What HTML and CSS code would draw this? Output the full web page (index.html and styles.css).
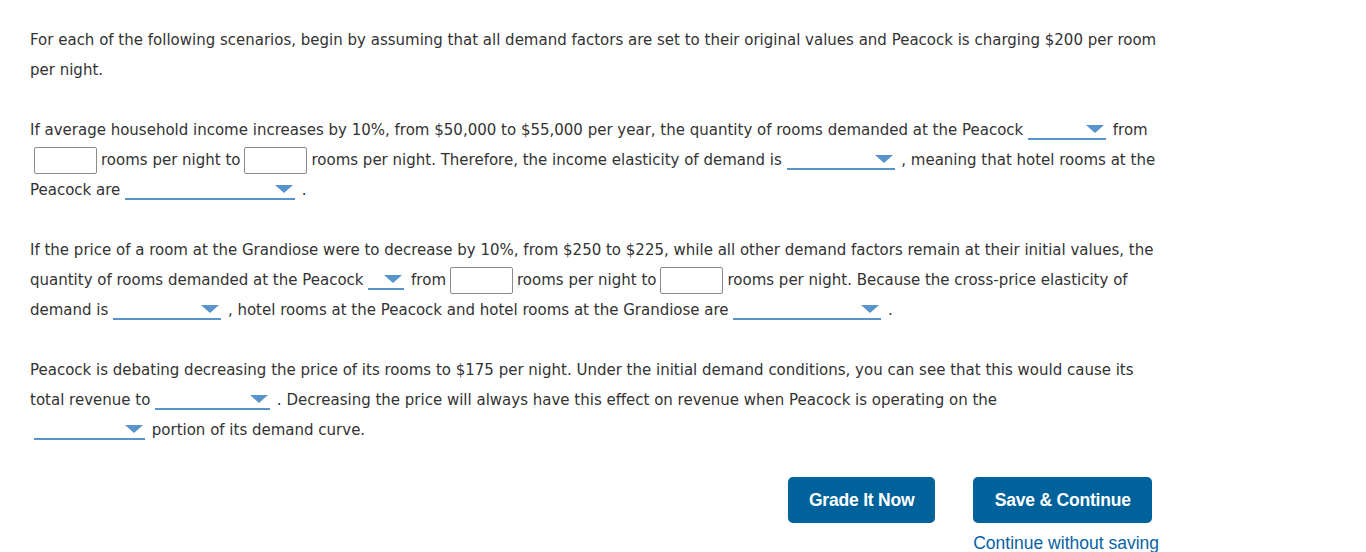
FILE: index.html
```html
<!DOCTYPE html>
<html>
<head>
<meta charset="utf-8">
<link rel="stylesheet" href="styles.css">
</head>
<body>
<div class="page">
  <p>For each of the following scenarios, begin by assuming that all demand factors are set to their original values and Peacock is charging $200 per room<br>per night.</p>

  <p>If average household income increases by 10%, from $50,000 to $55,000 per year, the quantity of rooms demanded at the Peacock <span class="dd w78"><i class="tri"></i></span> from<br><span class="box"></span>rooms per night to<span class="box"></span>rooms per night. Therefore, the income elasticity of demand is <span class="dd w108"><i class="tri"></i></span> , meaning that hotel rooms at the<br>Peacock are <span class="dd w170"><i class="tri"></i></span> .</p>

  <p>If the price of a room at the Grandiose were to decrease by 10%, from $250 to $225, while all other demand factors remain at their initial values, the<br>quantity of rooms demanded at the Peacock <span class="dd w36"><i class="tri"></i></span> from<span class="box"></span>rooms per night to<span class="box"></span>rooms per night. Because the cross-price elasticity of<br>demand is <span class="dd w108"><i class="tri"></i></span> , hotel rooms at the Peacock and hotel rooms at the Grandiose are <span class="dd w148"><i class="tri"></i></span> .</p>

  <p>Peacock is debating decreasing the price of its rooms to $175 per night. Under the initial demand conditions, you can see that this would cause its<br>total revenue to <span class="dd w115"><i class="tri"></i></span> . Decreasing the price will always have this effect on revenue when Peacock is operating on the<br><span class="dd w111 lead"><i class="tri"></i></span> portion of its demand curve.</p>

  <div class="actions">
    <button class="btn grade">Grade It Now</button>
    <div class="save-col">
      <button class="btn save">Save &amp; Continue</button>
      <a class="skip" href="#">Continue without saving</a>
    </div>
  </div>
</div>
</body>
</html>
```

FILE: styles.css
```css
html, body {
  margin: 0;
  padding: 0;
  background: #ffffff;
}

.page {
  padding: 25px 30px 0 30px;
  font-family: "DejaVu Sans", Verdana, sans-serif;
  font-size: 15px;
  line-height: 30px;
  color: #333333;
}

.page p {
  margin: 0 0 30px 0;
  white-space: nowrap;
}

.dd {
  display: inline-block;
  box-sizing: border-box;
  height: 20px;
  border-bottom: 2px solid #5694cb;
  vertical-align: -5px;
  margin-right: 2px;
}

.dd.lead {
  margin-left: 4px;
}

.tri {
  float: right;
  width: 0;
  height: 0;
  margin: 5px 2px 0 0;
  border-left: 9px solid transparent;
  border-right: 9px solid transparent;
  border-top: 8px solid #5694cb;
}

.w36 { width: 36px; }
.w78 { width: 78px; }
.w108 { width: 108px; }
.w111 { width: 111px; }
.w115 { width: 115px; }
.w148 { width: 148px; }
.w170 { width: 170px; }

.box {
  display: inline-block;
  box-sizing: border-box;
  width: 63px;
  height: 27px;
  border: 1px solid #8c8c8c;
  border-radius: 2px;
  background: #fff;
  margin: 0 4px;
  vertical-align: middle;
}

.actions {
  display: flex;
  justify-content: flex-end;
  align-items: flex-start;
  gap: 38px;
  width: 1129px;
  margin-top: 32px;
}

.btn {
  height: 46px;
  border: none;
  border-radius: 5px;
  background: #00629b;
  color: #ffffff;
  font-family: "Liberation Sans", Arial, sans-serif;
  font-weight: bold;
  font-size: 17.5px;
  letter-spacing: -0.2px;
  padding: 0;
  cursor: pointer;
}

.grade { width: 147px; }
.save { width: 179px; }

.save-col {
  display: flex;
  flex-direction: column;
  align-items: flex-start;
}

.skip {
  margin-top: 10px;
  font-family: "Liberation Sans", Arial, sans-serif;
  font-size: 17.5px;
  line-height: 20px;
  color: #0a62a3;
  text-decoration: none;
}
```
